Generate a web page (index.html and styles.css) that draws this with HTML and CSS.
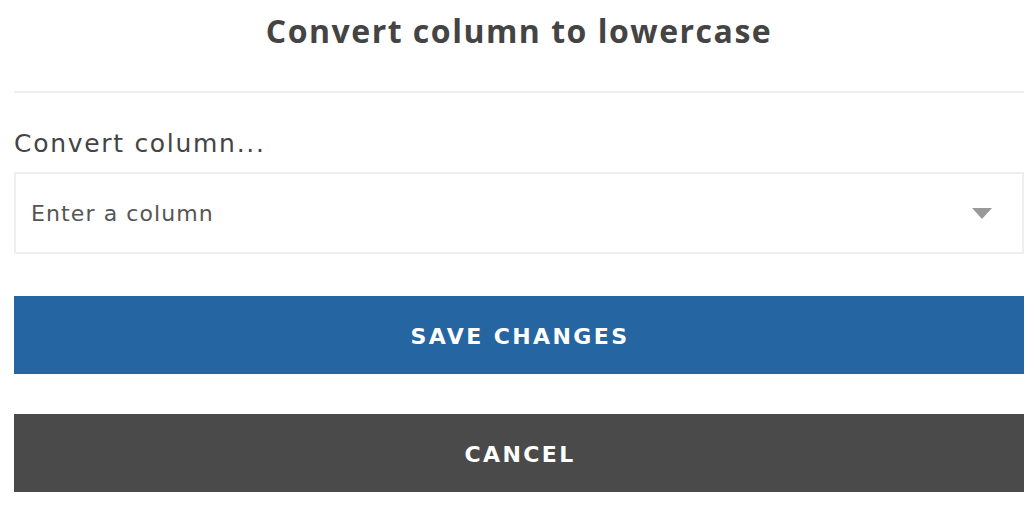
FILE: index.html
```html
<!DOCTYPE html>
<html lang="en">

<head>
    <meta charset="UTF-8">
    <meta name="viewport" content="width=device-width, initial-scale=1.0">
    <title>Convert column to lowercase</title>
    <link rel="stylesheet" href="styles.css">
</head>

<body>
    <div class="modal">
        <h1 class="modal_title">Convert column to lowercase</h1>
        <div class="modal_body">
            <label class="field_label">Convert column...</label>
            <div class="select_box">
                <span class="select_placeholder">Enter a column</span>
                <span class="select_arrow"></span>
            </div>
            <button class="btn btn_save">SAVE CHANGES</button>
            <button class="btn btn_cancel">CANCEL</button>
        </div>
    </div>
</body>

</html>
```

FILE: styles.css
```css
body {
    margin: 0;
    background-color: white;
    font-family: "DejaVu Sans", "Open Sans", sans-serif;
    color: #444444;
}

.modal {
    width: 1010px;
    margin-left: 14px;
}

.modal_title {
    margin: 0px;
    padding-top: 11px;
    padding-bottom: 40px;
    border-bottom: 2px solid #eeeeee;
    font-family: "Open Sans", sans-serif;
    font-size: 32px;
    line-height: 40px;
    font-weight: 700;
    letter-spacing: 1.5px;
    text-align: center;
    color: #444444;
}

.modal_body {
    display: flex;
    flex-direction: column;
}

.field_label {
    margin-top: 35px;
    font-size: 25px;
    line-height: 32px;
    letter-spacing: 1.7px;
    color: #444444;
}

.select_box {
    display: flex;
    align-items: center;
    justify-content: space-between;
    margin-top: 12px;
    height: 82px;
    padding: 0px 30px 0px 15px;
    border: 2px solid #eeeeee;
    box-sizing: border-box;
}

.select_placeholder {
    font-size: 22px;
    letter-spacing: 1.1px;
    color: #555555;
}

.select_arrow {
    width: 0px;
    height: 0px;
    border-left: 10px solid transparent;
    border-right: 10px solid transparent;
    border-top: 11px solid #999999;
}

.btn {
    height: 78px;
    border: none;
    padding: 2px 0px 0px 2px;
    font-family: inherit;
    font-size: 22px;
    font-weight: 700;
    letter-spacing: 2.4px;
    color: white;
}

.btn_save {
    margin-top: 42px;
    background-color: #2565a2;
}

.btn_cancel {
    margin-top: 40px;
    background-color: #4a4a4a;
}
```
